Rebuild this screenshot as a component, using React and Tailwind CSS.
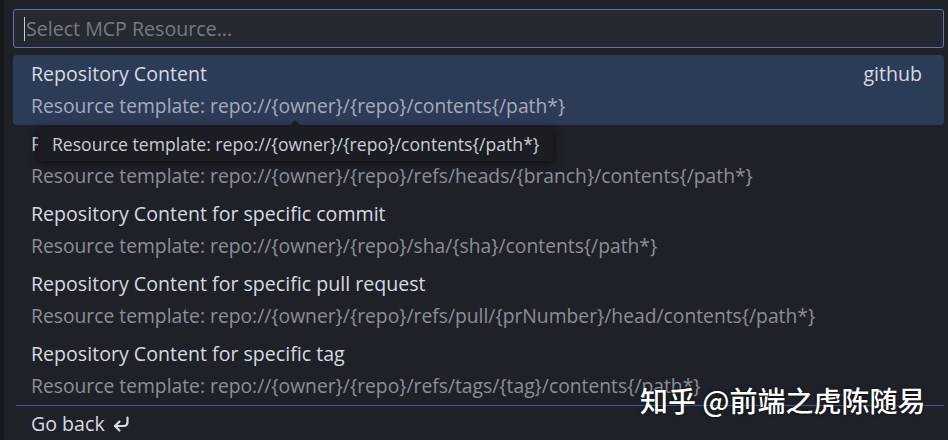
const items = [
  {
    title: 'Repository Content',
    template: 'repo://{owner}/{repo}/contents{/path*}',
    source: 'github',
  },
  {
    title: 'Repository Content for specific branch',
    template: 'repo://{owner}/{repo}/refs/heads/{branch}/contents{/path*}',
  },
  {
    title: 'Repository Content for specific commit',
    template: 'repo://{owner}/{repo}/sha/{sha}/contents{/path*}',
  },
  {
    title: 'Repository Content for specific pull request',
    template: 'repo://{owner}/{repo}/refs/pull/{prNumber}/head/contents{/path*}',
  },
  {
    title: 'Repository Content for specific tag',
    template: 'repo://{owner}/{repo}/refs/tags/{tag}/contents{/path*}',
  },
];

const ReturnIcon = () => (
  <svg width="20" height="18" viewBox="0 0 20 18" fill="none" className="ml-1.5 mt-0.5">
    <path d="M16.5 2.5v5a3.5 3.5 0 0 1-3.5 3.5H4" stroke="currentColor" strokeWidth="2.2" strokeLinecap="round" />
    <path d="M8.5 6.5L4 11l4.5 4.5" stroke="currentColor" strokeWidth="2.2" strokeLinecap="round" strokeLinejoin="round" />
  </svg>
);

export default function App() {
  return (
    <div
      className="relative flex h-[440px] w-[948px] overflow-hidden bg-[#17191d]"
      style={{ fontFamily: '"Open Sans", "Noto Sans", "Noto Sans CJK SC", sans-serif' }}
    >
      <div className="ml-[4px] flex flex-1 flex-col bg-[#1f2128] pl-[9px] pr-[4px] pt-[9px]">
        {/* Search input */}
        <div className="flex h-[40px] items-center rounded-[3px] border border-[#5877b8] bg-[#262930] pl-[10px]">
          <span className="mr-[1px] h-[24px] w-px bg-[#c8ccd4]" />
          <span className="text-[19.6px] text-[#767b88]">Select MCP Resource...</span>
        </div>

        {/* Resource list */}
        <div className="mt-[7px] flex flex-col">
          {items.map((item, i) => (
            <div
              key={item.title}
              className={`flex h-[70px] flex-col justify-center rounded-[4px] pl-[18px] pr-[22px] ${
                i === 0 ? 'bg-[#2c3b56]' : ''
              }`}
            >
              <div className="flex items-center justify-between text-[19.6px] leading-[32px] text-[#d6dae2]">
                <span>{item.title}</span>
                {item.source && <span className="text-[#d6dae2]">{item.source}</span>}
              </div>
              <div
                className={`text-[19.3px] leading-[32px] ${
                  i === 0 ? 'text-[#a3abbb]' : 'text-[#8a8f9a]'
                }`}
              >
                Resource template: {item.template}
              </div>
            </div>
          ))}
        </div>

        <div className="ml-[3px] h-px bg-[#3e5a92]" />

        <div className="flex h-[34px] items-center pl-[18px] text-[19.6px] text-[#d6dae2]">
          Go back
          <ReturnIcon />
        </div>
      </div>

      {/* Tooltip */}
      <div className="absolute left-[38px] top-[127px] flex h-[34px] w-[515px] items-center rounded-[4px] bg-[#1b1d22] pl-[14px] text-[17.6px] text-[#c9cdd5] shadow-[0_2px_8px_rgba(0,0,0,0.6)]">
        <span className="absolute -top-[5px] left-[252px] h-[10px] w-[10px] rotate-45 bg-[#1b1d22]" />
        <span className="relative">Resource template: repo://{'{owner}'}/{'{repo}'}/contents{'{/path*}'}</span>
      </div>

      {/* Watermark */}
      <div
        className="absolute left-[640px] top-[379px] text-[28px] font-medium text-white [text-shadow:0_0_3px_rgba(0,0,0,0.8)]"
        style={{ fontFamily: '"Noto Sans CJK SC", sans-serif' }}
      >
        知乎 @前端之虎陈随易
      </div>
    </div>
  );
}
